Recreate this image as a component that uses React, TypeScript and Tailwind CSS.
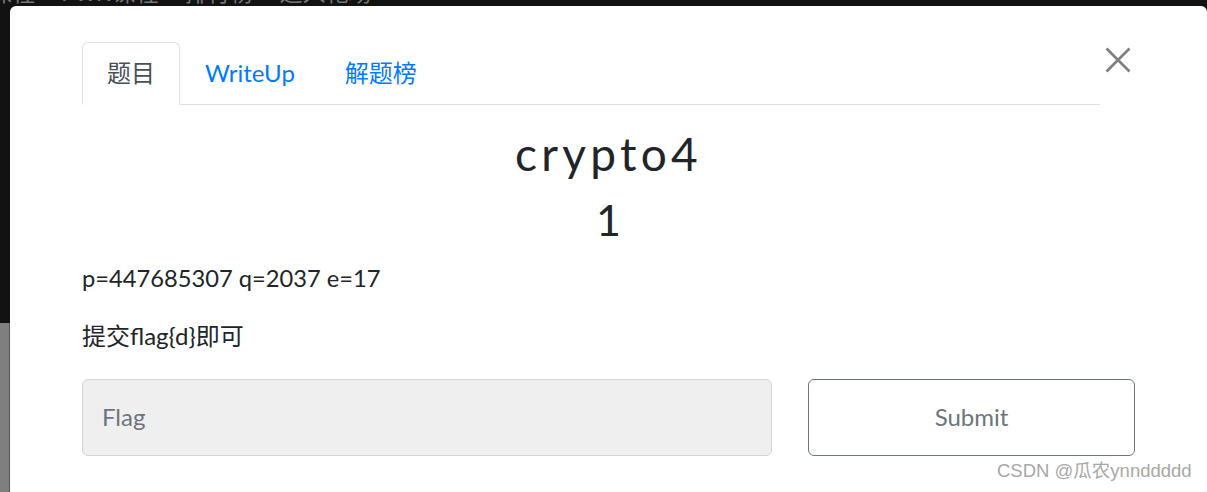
import React from "react";

export default function App() {
  return (
    <div
      className="relative w-[1207px] h-[492px] overflow-hidden"
      style={{ fontFamily: "Lato, 'Noto Sans CJK SC', sans-serif" }}
    >
      {/* backdrop */}
      <div className="flex flex-col h-full">
        <div className="h-[323px] bg-[#121212]" />
        <div className="flex-1 bg-[#7f7f7f]" />
      </div>
      <div className="absolute left-[9px] top-[323px] w-px h-[169px] bg-[#555555]" />

      {/* page nav text behind backdrop */}
      <div
        className="absolute top-[-21px] left-[-11px] flex gap-[26px] text-[23px] leading-[24px] text-[#777777] whitespace-nowrap"
        style={{ fontFamily: "'Noto Sans CJK SC', sans-serif" }}
      >
        <span>课程</span>
        <span>PWN课程</span>
        <span>排行榜</span>
        <span>进入靶场</span>
      </div>

      {/* modal */}
      <div className="absolute left-[10px] top-[6px] w-[1197px] h-[490px] bg-white rounded-[6px] px-[72px] pt-[36px] text-[#212529]">
        <div className="flex items-start">
          <div className="flex-1 flex border-b border-[#dee2e6] text-[24px] leading-[36px]">
            <div className="px-[24px] py-[12px] border border-[#dee2e6] border-b-white rounded-t-[6px] -mb-px text-[#495057] bg-white">
              题目
            </div>
            <div className="px-[24px] py-[12px] border border-transparent text-[#007bff]">WriteUp</div>
            <div className="px-[24px] py-[12px] border border-transparent text-[#007bff]">解题榜</div>
          </div>
          <div className="w-[35px] h-[40px] flex justify-center pt-[5px]">
            <svg width="26" height="26" viewBox="0 0 26 26">
              <path d="M1.5 1.5 L24.5 24.5 M24.5 1.5 L1.5 24.5" stroke="#7f7f7f" strokeWidth="2.6" fill="none" />
            </svg>
          </div>
        </div>

        <h3 className="text-center text-[46px] leading-[1.2] tracking-[4.3px] mt-[21px] mb-[13px]">crypto4</h3>
        <h4 className="text-center text-[43px] leading-[1.2]">1</h4>

        <p className="text-[23.7px] leading-[36px] mt-[14px] mb-[22px]">p=447685307 q=2037 e=17</p>
        <p className="text-[24px] leading-[36px] mb-[25px]">提交flag{"{d}"}即可</p>

        <div className="flex gap-[36px]">
          <div className="w-[690px] h-[77px] bg-[#efefef] border border-[#ced4da] rounded-[6px] flex items-center px-[19px] text-[24px] text-[#6c757d]">
            Flag
          </div>
          <div className="flex-1 h-[77px] border border-[#6c757d] rounded-[6px] flex items-center justify-center text-[24px] text-[#6c757d]">
            Submit
          </div>
        </div>
      </div>

      {/* watermark */}
      <div
        className="absolute left-[997px] top-[460px] text-[18.5px] leading-[22px] text-[#a8a8a8] whitespace-nowrap"
        style={{ fontFamily: "'Liberation Sans', 'Noto Sans CJK SC', sans-serif", textShadow: "0 0 1px #ffffff" }}
      >
        CSDN @瓜农ynnddddd
      </div>
    </div>
  );
}
